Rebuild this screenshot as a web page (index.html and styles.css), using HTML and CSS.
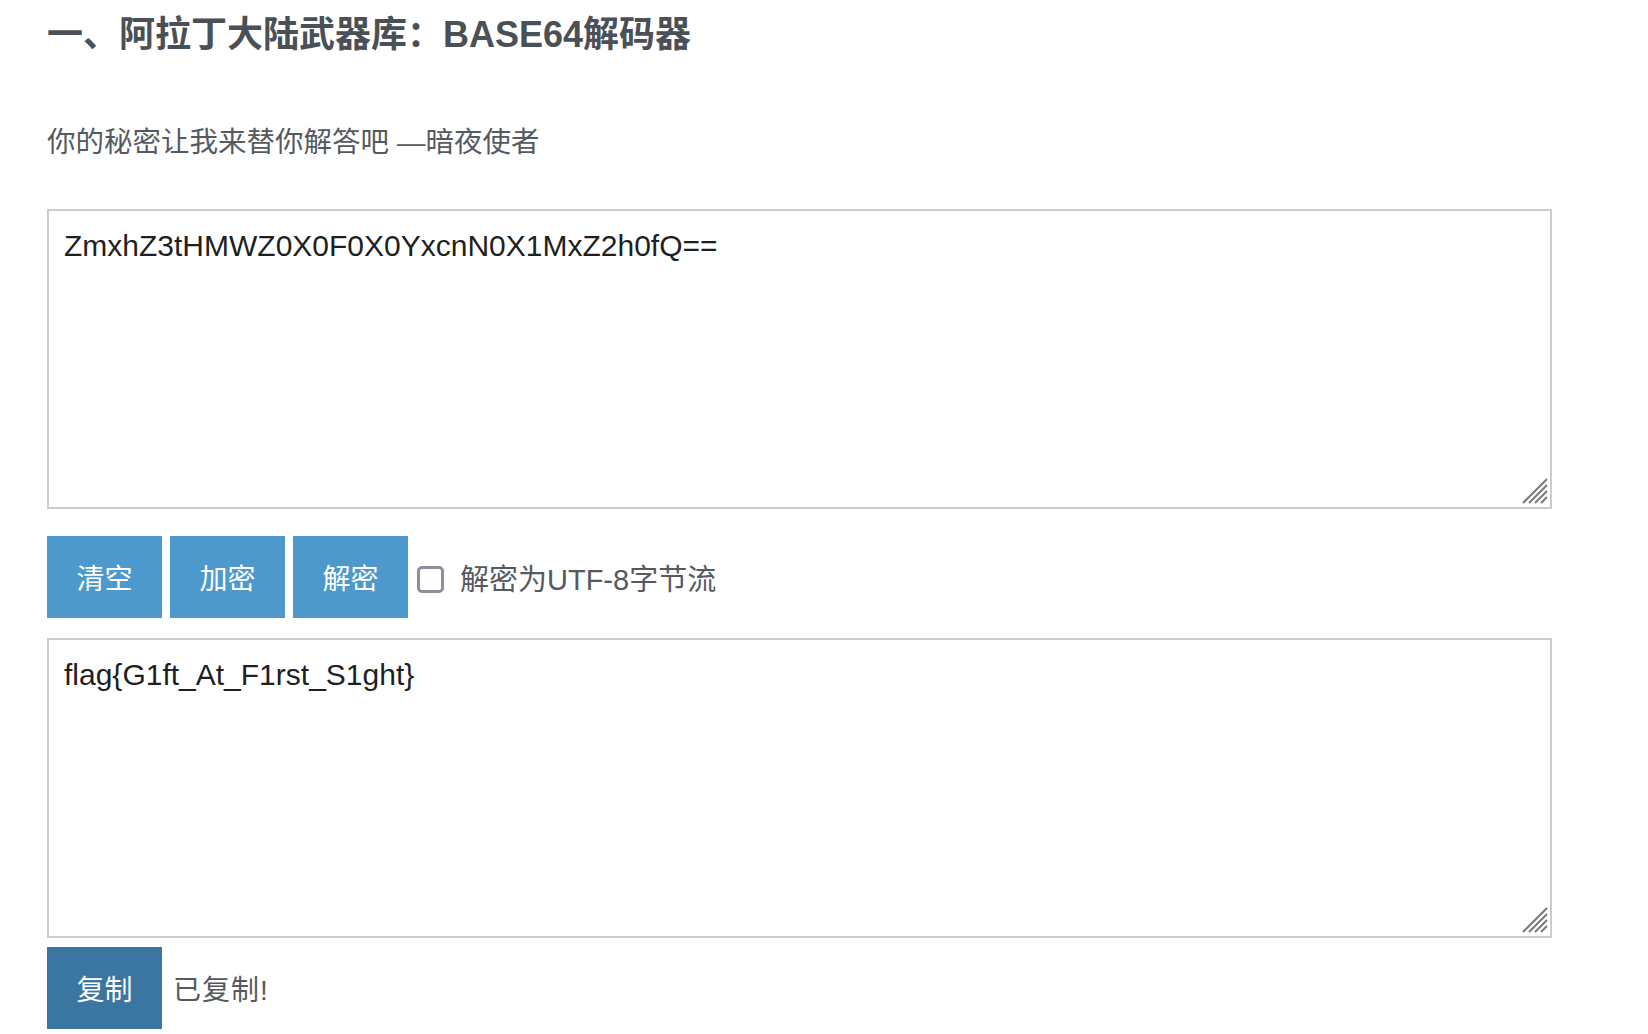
FILE: index.html
```html
<!DOCTYPE html>
<html lang="zh-CN">

<head>
    <meta charset="UTF-8">
    <meta name="viewport" content="width=device-width, initial-scale=1.0">
    <title>BASE64解码器</title>
    <link rel="stylesheet" href="styles.css">
</head>

<body>

    <div class="page">
        <h2>一、阿拉丁大陆武器库：BASE64解码器</h2>
        <p class="intro">你的秘密让我来替你解答吧 —暗夜使者</p>

        <div class="area-wrap">
            <textarea id="input" class="area">ZmxhZ3tHMWZ0X0F0X0YxcnN0X1MxZ2h0fQ==</textarea>
            <svg class="grip" width="26" height="26" viewBox="0 0 26 26">
                <path d="M1 25 L25 1 M7 25 L25 7 M13 25 L25 13 M19 25 L25 19" stroke="#7a7a7a" stroke-width="2"/>
            </svg>
        </div>

        <div class="actions">
            <button class="btn" onclick="clearAll()">清空</button>
            <button class="btn" onclick="encode()">加密</button>
            <button class="btn" onclick="decode()">解密</button>
            <label class="check">
                <input id="utf8" type="checkbox">
                <span>解密为UTF-8字节流</span>
            </label>
        </div>

        <div class="area-wrap out">
            <textarea id="output" class="area">flag{G1ft_At_F1rst_S1ght}</textarea>
            <svg class="grip" width="26" height="26" viewBox="0 0 26 26">
                <path d="M1 25 L25 1 M7 25 L25 7 M13 25 L25 13 M19 25 L25 19" stroke="#7a7a7a" stroke-width="2"/>
            </svg>
        </div>

        <div class="copy-row">
            <button class="btn dark" onclick="copyOut()">复制</button>
            <span id="copyMsg" class="copy-msg">已复制!</span>
        </div>
    </div>

    <script>
        function clearAll() {
            document.getElementById("input").value = "";
            document.getElementById("output").value = "";
        }

        function encode() {
            const text = document.getElementById("input").value;
            document.getElementById("output").value = btoa(unescape(encodeURIComponent(text)));
        }

        function decode() {
            const text = document.getElementById("input").value;
            try {
                let raw = atob(text);
                if (!document.getElementById("utf8").checked) {
                    raw = decodeURIComponent(escape(raw));
                }
                document.getElementById("output").value = raw;
            } catch (e) {
                document.getElementById("output").value = "解密失败";
            }
        }

        function copyOut() {
            const out = document.getElementById("output");
            out.select();
            document.execCommand("copy");
            document.getElementById("copyMsg").textContent = "已复制!";
        }
    </script>

</body>
</html>
```

FILE: styles.css
```css
body {
    font-family: "Liberation Sans", "Noto Sans CJK SC", sans-serif;
    background-color: #fff;
    color: #555a60;
    margin: 0;
    padding: 0;
}

.page {
    width: 1505px;
    padding: 0 47px;
}

h2 {
    margin: 10px 0 0;
    font-size: 36px;
    line-height: 50px;
    font-weight: bold;
    color: #4b5056;
}

.intro {
    margin: 62px 0 0;
    font-size: 28.5px;
    line-height: 40px;
}

.area-wrap {
    position: relative;
    margin-top: 47px;
}

.area-wrap.out {
    margin-top: 20px;
}

.area {
    display: block;
    box-sizing: border-box;
    width: 100%;
    height: 300px;
    padding: 14px 15px;
    border: 2px solid #ccc;
    font-family: "Liberation Sans", sans-serif;
    font-size: 30px;
    line-height: 42px;
    color: #1f1f1f;
    resize: none;
    outline: none;
}

.grip {
    position: absolute;
    right: 4px;
    bottom: 5px;
}

.actions {
    display: flex;
    align-items: center;
    gap: 8px;
    margin-top: 27px;
}

.btn {
    height: 82px;
    width: 115px;
    border: none;
    background-color: #4d99cc;
    color: white;
    font-family: "Liberation Sans", "Noto Sans CJK SC", sans-serif;
    font-size: 28px;
    cursor: pointer;
}

.btn.dark {
    background-color: #3a76a0;
}

.check {
    display: flex;
    align-items: center;
    gap: 16px;
    margin-left: 1px;
    font-size: 29px;
}

.check input {
    appearance: none;
    width: 27px;
    height: 27px;
    margin: 4px 0 0;
    border: 3px solid #8e8d99;
    border-radius: 5px;
    background: white;
}

.copy-row {
    display: flex;
    align-items: center;
    gap: 11px;
    margin-top: 9px;
}

.copy-msg {
    font-size: 28px;
    letter-spacing: 1px;
}
```
